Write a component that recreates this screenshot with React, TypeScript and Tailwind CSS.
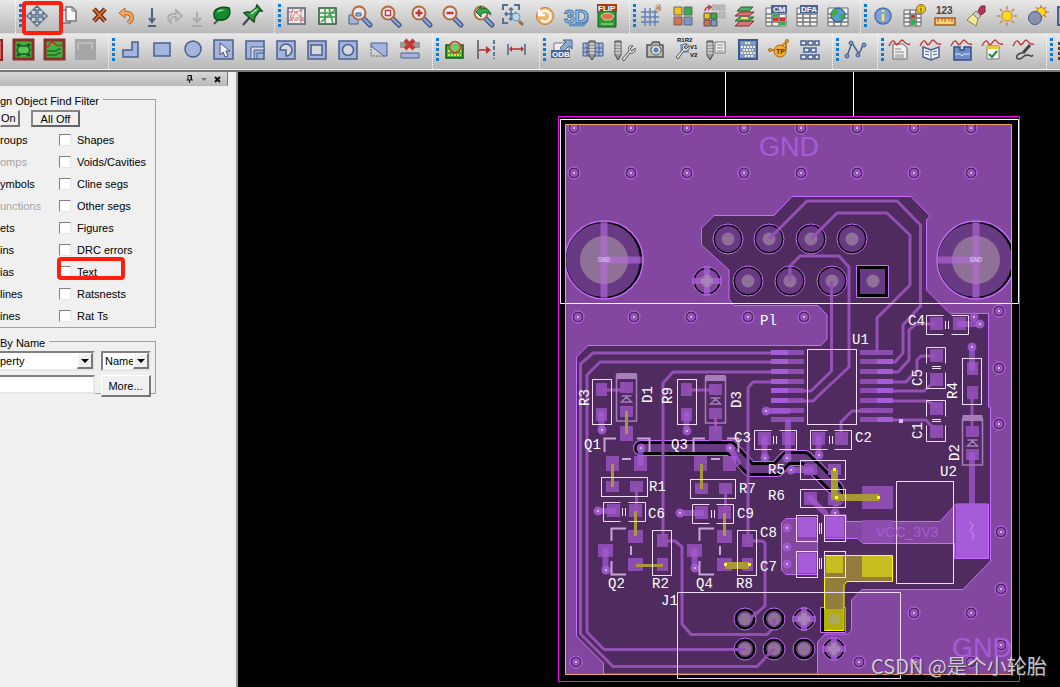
import type { ReactNode } from 'react';
import { clsx } from 'clsx';

const NAVY = '#48608f';
const BLUE = '#a3b4dd';

// ---------- toolbar icons, all drawn in a 24x24 box ----------

const sheet = (
  <>
    <path d="M2 4h20v18H2z" fill="#f2f2f2" stroke="#666" />
    <path d="M2 10h20M2 14h20M2 18h20M8 8v14M15 8v14" stroke="#777" strokeWidth="1.5" />
  </>
);

const lens = (inner: ReactNode) => (
  <>
    <path d="M15 15l6 6" stroke="#3d4f80" strokeWidth="5" strokeLinecap="round" />
    <path d="M15 15l6 6" stroke="#8ba0d2" strokeWidth="2.5" strokeLinecap="round" />
    <circle cx="10" cy="9" r="6.5" fill="#e3e8f5" stroke="#b86a36" strokeWidth="2" />
    {inner}
  </>
);

const probe = (
  <>
    <path d="M8 3h6v14l-3 5-3-5z" fill="#999" stroke="#444" />
    <path d="M8 6h6M8 9h6M8 12h6M8 15h6" stroke="#eee" />
  </>
);

const wave = <path d="M1 8c4-8 5-5 7-2s4-4 6-4 3 6 8 4" fill="none" stroke="#c43a3a" strokeWidth="1.5" />;

const tile = (inner: ReactNode) => (
  <>
    <path d="M3 3h18v18H3z" fill={BLUE} stroke={NAVY} strokeWidth="1.5" />
    {inner}
  </>
);

const wrench = (
  <path d="M10 21l7-8c-2-4 1-6 4-5l-3 3 2 2 3-3c1 4-2 6-5 5l-6 8z" fill="#ddd" stroke="#555" />
);

const icons: Record<string, ReactNode> = {
  Move: (
    <path
      d="M11 2l4 4h-3v5h5V8l4 4-4 4v-3h-5v5h3l-4 4-4-4h3v-5H5v3l-4-4 4-4v3h5V6H7z"
      fill="#d9e3ee"
      stroke="#54708c"
      strokeWidth="1.500"
    />
  ),
  Copy: (
    <>
      <path d="M5 6h8v13H5z" fill="#e8e8e8" stroke="#777" strokeWidth="1.5" />
      <path d="M9 3h6l4 4v10H9z" fill="#f6f6f6" stroke="#777" strokeWidth="1.5" />
      <path d="M15 3v4h4" fill="none" stroke="#777" />
    </>
  ),
  Delete: (
    <>
      <path d="M6 5l11 12M17 5L6 17" stroke="#5a2410" strokeWidth="4.5" />
      <path d="M6 5l11 12M17 5L6 17" stroke="#db6d2e" strokeWidth="2" />
    </>
  ),
  Undo: (
    <>
      <path d="M9 9c9-1 10 6 4 10" fill="none" stroke="#b6682b" strokeWidth="4.500" />
      <path d="M4 9l6-5v10z" fill="#f0a862" stroke="#b6682b" />
      <path d="M9 9c9-1 10 6 4 10" fill="none" stroke="#f0a862" strokeWidth="2.500" />
    </>
  ),
  'Undo to': <path d="M14 4v13M11 14l3 4 3-4M10 22h8" fill="none" stroke="#4a6580" strokeWidth="2" />,
  Redo: (
    <path d="M10 19c-6-5-2-10 5-9V6l6 6-6 5v-4c-4-1-6 2-5 6z" fill="#ccc" stroke="#a5a5a5" strokeWidth="1.500" />
  ),
  'Redo to': <path d="M13 8v10M9 14l4 4 4-4M8 22h10" fill="none" stroke="#aaa" strokeWidth="2" />,
  Via: (
    <>
      <path d="M3 20l5-5" stroke="#555" strokeWidth="2" />
      <path d="M3 11c-1-6 7-9 15-7 3 7-2 13-10 12-3 0-5-2-5-5z" fill="#178a2d" stroke="#0d4f1a" strokeWidth="1.5" />
      <path d="M6 9c0-4 4-4 9-3-3 1-7 1-9 3z" fill="#8ce28e" />
    </>
  ),
  Pin: (
    <>
      <path d="M1 21l7-8" stroke="#444" strokeWidth="2" />
      <path d="M2 9c4-2 6 0 7-1l5-4 1-3 5 6-3 0-4 6c-1 2 0 3-1 5z" fill="#2e9b3f" stroke="#14501f" strokeWidth="1.5" />
      <path d="M9 10l6-5" stroke="#8ce28e" strokeWidth="2" />
    </>
  ),
  Ratsnest: (
    <>
      <path d="M3 4h17v16H3z" fill="#eee" stroke="#555f75" strokeWidth="1.5" />
      <path d="M4 8h7l8-3M5 17l6-9 8 9M8 5l-3 9h14M16 5v14M4 16h15" fill="none" stroke="#c46a6a" strokeDasharray="4 1" />
    </>
  ),
  'Unrats all': (
    <>
      <path d="M3 4h17v16H3z" fill="#eee" stroke="#2e5238" strokeWidth="1.5" />
      <path d="M4 9h16M5 18L20 5M9 4v16M13 4l4 16M4 13h16" fill="none" stroke="#3f9d4d" strokeWidth="1.500" />
    </>
  ),
  'Zoom points': (
    <>
      <path d="M2 11h9v9H2z" fill={BLUE} stroke={NAVY} />
      <g transform="translate(2 0)">{lens(<path d="M7 9h5v3H7z" fill={BLUE} stroke={NAVY} />)}</g>
    </>
  ),
  'Zoom fit': lens(<path d="M7.500 6.500h5v5h-5z" fill="#fff" stroke="#c43a4a" strokeWidth="1.500" />),
  'Zoom in': lens(<path d="M10 5.500v7M6.500 9h7" stroke="#c4323c" strokeWidth="2.500" />),
  'Zoom out': lens(<path d="M6.500 9h7" stroke="#c4323c" strokeWidth="2.500" />),
  'Zoom previous': lens(
    <path d="M5 8l5-6v3c5-2 9 1 10 6-3-3-6-3-10-1v3z" fill="#35a548" stroke="#176128" />,
  ),
  'Zoom center': (
    <>
      <path d="M1 6V1h5M12 1h5v5M1 14v5h5" fill="none" stroke="#54708c" strokeWidth="2" />
      <path d="M9 4v12M3 10h12M7 6l2-2 2 2M7 14l2 2 2-2M5 8l-2 2 2 2M13 8l2 2-2 2" fill="none" stroke="#54708c" strokeWidth="1.500" />
      <path d="M17 17l4 4" stroke="#a56a3a" strokeWidth="3" />
      <circle cx="14" cy="13" r="4" fill="#b9d8ee" stroke="#6d91ae" />
    </>
  ),
  Refresh: (
    <>
      <circle cx="12" cy="12" r="8.500" fill="#f6b45e" stroke="#c47a2c" />
      <path d="M7 10a5.500 5.500 0 1 1 1 6M6 5v6h6" fill="none" stroke="#fff" strokeWidth="2.500" />
    </>
  ),
  '3D': (
    <>
      <path d="M5 21h14l4-4V9" fill="none" stroke="#5f94c4" strokeWidth="3" />
      <text x="0" y="19" fontSize="19" fontWeight="700" fill="#a8c8e8" stroke="#3f74a8" strokeWidth="1">3D</text>
    </>
  ),
  Flip: (
    <>
      <path d="M3 7h18v16H3z" fill="#2c9a35" stroke="#1a5520" />
      <path d="M6 12c3-4 9-4 13 0l-3 4H9zM6 20h12" fill="#e36c4e" stroke="#bfe7a5" />
      <path d="M2 0h20v8H2z" fill="#9b4413" />
      <text x="3" y="7" fontSize="8" fontWeight="700" fill="#fff">FLIP</text>
    </>
  ),
  Grid: (
    <>
      <path d="M5 4v18M10 4v18M15 6v16M1 8h17M1 13h18M1 18h18" stroke="#6680b8" strokeWidth="1.500" />
      <path d="M19 0v7M15 4h7M16 1l5 6M21 1l-5 5" stroke="#c77a34" />
    </>
  ),
  Colors: (
    <g stroke="#666">
      <path d="M3 3h8v8H3z" fill="#f4c320" />
      <path d="M13 3h8v8h-8z" fill="#3cab49" />
      <path d="M3 13h8v8H3z" fill="#d4734f" />
      <path d="M13 13h8v8h-8z" fill="#7f96cb" />
    </g>
  ),
  'Layer colors': (
    <>
      <path d="M10 1h6v5h-6zM17 1h6v5h-6zM17 8h6v6h-6z" fill="#bbb" stroke="#aaa" />
      <path d="M2 9h6v6H2z" fill="#f4c320" stroke="#555" />
      <path d="M9 9h6v6H9z" fill="#3cab49" stroke="#555" />
      <path d="M2 16h6v6H2z" fill="#d4734f" stroke="#555" />
      <path d="M9 16h6v6H9z" fill="#7f96cb" stroke="#555" />
      <path d="M3 7c0-3 2-4 5-4M6 1l3 2-3 3" fill="none" stroke="#c43a3a" strokeWidth="1.500" />
    </>
  ),
  'Cross section': (
    <>
      <path d="M7 17h14l-5 5H2z" fill="#d97676" stroke="#7d3035" />
      <path d="M7 13h14l-5 4H2z" fill="#58b163" stroke="#24612d" />
      <path d="M7 8h14l-5 4H2z" fill="#d97676" stroke="#7d3035" />
      <path d="M8 3h12l-4 4H4z" fill="#58b163" stroke="#24612d" />
      <path d="M8 14h7" stroke="#f4e36a" strokeWidth="2" />
    </>
  ),
  'Constraint manager': (
    <>
      {sheet}
      <path d="M9 10h5v3H9zM16 18h5v3h-5z" fill="#32b04b" />
      <path d="M9 14h5v3H9zM16 14h5v3h-5z" fill="#e02a2a" />
      <path d="M7 1h16v8H7z" fill="#4a6394" />
      <text x="9" y="8" fontSize="8" fontWeight="700" fill="#fff">CM</text>
    </>
  ),
  DFA: (
    <>
      {sheet}
      <path d="M5 1h18v8H5z" fill="#4a6394" />
      <text x="6" y="8" fontSize="8" fontWeight="700" fill="#fff">DFA</text>
    </>
  ),
  Globe: (
    <>
      {sheet}
      <circle cx="12" cy="11" r="7" fill="#5c9bd6" stroke="#235079" />
      <path d="M8 5c4 0 5 3 3 5s-3 5-4 3-3-5 1-8zM13 12l4-3 1 4-3 4z" fill="#3fae49" />
    </>
  ),
  Info: (
    <>
      <circle cx="12" cy="12" r="8" fill="#7f9fda" stroke="#506da8" strokeWidth="1.500" />
      <path d="M12 10v7M12 6v2" stroke="#f5e85c" strokeWidth="2.500" />
    </>
  ),
  'Show element': (
    <>
      <path d="M2 6h17v16H2z" fill="#f2f2f2" stroke="#666" />
      <path d="M2 10h17M2 14h17M2 18h17M8 6v16M14 6v16" stroke="#777" strokeWidth="1.5" />
      <path d="M9 11h4v3H9z" fill="#e02a2a" />
      <path d="M9 15h4v6H9z" fill="#32b04b" />
      <circle cx="19" cy="5" r="4.500" fill="#f4c320" stroke="#8a6a10" />
      <path d="M19 4v4M19 2v1" stroke="#5a4300" />
    </>
  ),
  Measure: (
    <>
      <text x="3" y="10" fontSize="10" fontWeight="700" fill="#444">123</text>
      <path d="M2 14h20v7H2z" fill="#f6cf74" stroke="#a85d1e" strokeWidth="1.500" />
      <path d="M5 14v4M9 14v3M12 14v4M16 14v3M19 14v4" stroke="#a85d1e" />
    </>
  ),
  Highlight: (
    <>
      <path d="M14 7l3-5h4v6l-4 3z" fill="#b83456" stroke="#7b2340" />
      <path d="M12 7l5 5-3 3-5-5z" fill="#ccc" stroke="#777" />
      <path d="M9 10l5 5-2 7-9-6z" fill="#f6e59a" stroke="#8c7c3c" />
    </>
  ),
  Sun: (
    <>
      <path d="M12 2v20M2 12h20M5 5l14 14M19 5L5 19" stroke="#c58a4a" strokeWidth="1.500" />
      <circle cx="12" cy="12" r="6.500" fill="#d0d0d0" />
      <circle cx="12" cy="12" r="5" fill="#ffd81f" stroke="#b8862a" />
    </>
  ),
  Shadow: (
    <>
      <path d="M15 1v14M8 8h15M10 3l10 10M20 3l-8 8" stroke="#c58a4a" strokeWidth="1.500" />
      <circle cx="15" cy="8" r="4.500" fill="#ffd81f" stroke="#b8862a" />
      <circle cx="9" cy="14" r="6.500" fill="#8592b0" stroke="#4a587a" />
    </>
  ),
  Edge: <path d="M1 3h20v18H1z" fill={BLUE} stroke={NAVY} strokeWidth="2" />,
  'Edge red': <path d="M2 2h20v20H2z" fill="#d66" stroke="#8a2525" strokeWidth="2" />,
  'Placement mode': (
    <>
      <path d="M3 2h19v19H3z" fill="#46b13f" stroke="#8a2f2a" strokeWidth="3" />
      <path d="M8 8h9l2 4-2 4H8l-2-4z" fill="#5cc455" stroke="#1d5a2a" strokeWidth="1.500" />
      <path d="M6 6h3v2H6zM16 6h3v2h-3zM6 16h3v2H6zM16 16h3v2h-3z" fill="#1d5a2a" stroke="#1d5a2a" />
    </>
  ),
  'Etch mode': (
    <>
      <path d="M3 2h19v19H3z" fill="#46b13f" stroke="#8a2f2a" strokeWidth="3" />
      <path d="M4 8c3 3 3-4 6-4s4 7 11 2" fill="none" stroke="#b23030" strokeWidth="1.500" />
      <path d="M5 13h9l3-2h2M5 17h9l3-2h2" fill="none" stroke="#1d6a2a" strokeWidth="1.500" />
    </>
  ),
  'Signal mode': (
    <>
      <path d="M2 1h21v21H2z" fill="#a6a6a6" />
      <path d="M5 12V5h14v6" fill="none" stroke="#d4d4d4" />
    </>
  ),
  'Shape polygon': <path d="M4 19v-7h9V4h6v15z" fill={BLUE} stroke={NAVY} strokeWidth="1.500" />,
  'Shape rectangle': <path d="M4 5h16v13H4z" fill={BLUE} stroke={NAVY} strokeWidth="1.500" />,
  'Shape circle': <circle cx="12" cy="11" r="8" fill={BLUE} stroke={NAVY} strokeWidth="1.500" />,
  'Shape select': (
    <>
      <path d="M2 2h19v19H2z" fill={BLUE} stroke={NAVY} strokeWidth="1.5" />
      <path d="M8 5v12l3-3 2 5 3-1-2-5h4z" fill="#eee" stroke="#47546b" />
    </>
  ),
  'Shape edit': tile(
    <>
      <path d="M8 21V9h13v3H11v9z" fill="#ddd" stroke={NAVY} />
      <path d="M14 21v-6h7" fill="none" stroke={NAVY} />
    </>,
  ),
  'Void polygon': tile(<path d="M6 12h6v6a6 6 0 1 0-6-6z" fill="#d8d8d8" stroke={NAVY} strokeWidth="1.500" />),
  'Void rectangle': tile(<path d="M6 7h11v10H6z" fill="#d8d8d8" stroke={NAVY} strokeWidth="1.500" />),
  'Void circle': tile(<circle cx="12" cy="12" r="5.500" fill="#d8d8d8" stroke={NAVY} strokeWidth="1.500" />),
  'Void element': (
    <>
      <path d="M4 5h16v13h-3L4 8z" fill={BLUE} stroke={NAVY} />
      <path d="M4 8v10h13" fill="none" stroke="#665" strokeDasharray="2 1" />
    </>
  ),
  'Delete islands': (
    <>
      <path d="M2 4h20v6H2z" fill="#999" />
      <path d="M7 2l9 9M16 2l-9 9" stroke="#c8372c" strokeWidth="4" />
      <path d="M3 15h18v5H3z" fill={BLUE} stroke={NAVY} />
    </>
  ),
  'Drc update': (
    <>
      <path d="M3 7h17v13H3z" fill="#49b23c" stroke="#145719" strokeWidth="1.500" />
      <path d="M5 17h13M5 13h13" stroke="#d7e84a" strokeDasharray="2 1" strokeWidth="2" />
      <circle cx="12" cy="9" r="5.500" fill="#7bd270" fillOpacity="0.8" stroke="#cf3b3b" strokeWidth="1.500" />
    </>
  ),
  'Spread out': (
    <>
      <path d="M4 2v19" stroke="#555" strokeWidth="1.500" />
      <path d="M20 2v19" stroke="#35568c" strokeWidth="1.500" strokeDasharray="4 2" />
      <path d="M5 12h8" stroke="#b83030" strokeWidth="1.500" />
      <path d="M12 8l5 4-5 4z" fill="#b83030" />
    </>
  ),
  Dimension: (
    <>
      <path d="M3 6v11M20 6v11" stroke="#48608f" strokeWidth="1.500" />
      <path d="M6 11h12" stroke="#b83030" strokeWidth="1.500" />
      <path d="M4 11l3-3v6zM19 11l-3-3v6z" fill="#b83030" />
    </>
  ),
  ODB: (
    <>
      <path d="M4 5h15v14H4z" fill="#eee" stroke="#777" />
      <path d="M10 10l6-6-3-2h9v9l-3-3-6 6z" fill="#8fa8cf" stroke="#4a6394" />
      <path d="M1 12h19v8H1z" fill="#4a6394" />
      <text x="2" y="19" fontSize="8" fontWeight="700" fill="#fff">ODB</text>
    </>
  ),
  'Probe table': (
    <>
      <path d="M2 5h20v13H2z" fill={BLUE} stroke={NAVY} />
      <path d="M2 10h20M2 14h20M6 5v13M18 5v13" stroke={NAVY} />
      {probe}
    </>
  ),
  'Probe tools': (
    <>
      <g transform="translate(-5 0)">{probe}</g>
      {wrench}
    </>
  ),
  Camera: (
    <>
      <path d="M4 7h4l2-3h6l1 3h3v12H4z" fill="#bcbcbc" stroke="#555" strokeWidth="1.500" />
      <circle cx="13" cy="12" r="5" fill="#ddd" stroke="#555" />
      <circle cx="13" cy="12" r="2.500" fill="#5b78b8" />
    </>
  ),
  Rename: (
    <>
      <path d="M6 6h9v9H6z" fill="#88a3d6" />
      <text x="3" y="4" fontSize="6" fontWeight="700" fill="#111">R1R2</text>
      <text x="16" y="11" fontSize="6" fontWeight="700" fill="#111">V1</text>
      <text x="16" y="19" fontSize="6" fontWeight="700" fill="#111">V2</text>
      <g transform="translate(-8 -2)">{wrench}</g>
    </>
  ),
  'Probe report': (
    <>
      <g transform="translate(-6 0)">{probe}</g>
      <path d="M10 4h10v11H10z" fill="#eee" stroke="#777" />
      <path d="M12 7h6M12 10h6M12 13h6" stroke="#888" />
    </>
  ),
  Matrix: (
    <>
      <path d="M3 2h18v19H3z" fill="#7f97c8" stroke="#3d588f" strokeWidth="2" />
      <path d="M9 5h6M5 9h14M7 12h10M5 15h14M9 18h8" stroke="#f5eec0" strokeWidth="2" strokeDasharray="2 1" />
    </>
  ),
  Testpoint: (
    <>
      <path d="M2 12h9M14 9l5-5M19 4v8" stroke="#c8801e" strokeWidth="2" />
      <circle cx="20" cy="3" r="1.500" fill="#f2ae2e" stroke="#a96712" />
      <circle cx="3" cy="12" r="1.500" fill="#f2ae2e" stroke="#a96712" />
      <circle cx="13" cy="13" r="6" fill="#f2ae2e" stroke="#a96712" />
      <text x="9" y="16" fontSize="7" fontWeight="700" fill="#513000">TP</text>
    </>
  ),
  Array: (
    <>
      <path d="M4 5h16M6 12h12M4 19h16" stroke="#888" />
      <path d="M3 3h5v4H3zM10 3h5v4h-5zM17 3h4v4h-4zM6 10h5v4H6zM13 10h5v4h-5zM3 17h5v4H3zM10 17h5v4h-5zM17 17h4v4h-4z" fill="#e6ecfa" stroke={NAVY} strokeWidth="1.500" />
    </>
  ),
  Net: (
    <>
      <path d="M4 18l5-13 7 11 5-11" fill="none" stroke={NAVY} strokeWidth="1.500" />
      <g fill="#7f97c8" stroke={NAVY}>
        <circle cx="4" cy="18" r="2" />
        <circle cx="8" cy="5" r="2" />
        <circle cx="15" cy="17" r="2" />
        <circle cx="21" cy="7" r="2" />
      </g>
    </>
  ),
  'Signal report': (
    <>
      <path d="M5 6h10l4 4v11H5z" fill="#eee" stroke="#666" />
      <path d="M7 11h6M7 14h9M7 17h9M7 19h9" stroke="#888" />
      {wave}
    </>
  ),
  'Signal library': (
    <>
      <path d="M4 9l8 3 8-3v10l-8 3-8-3z" fill="#f2f5fc" stroke={NAVY} strokeWidth="1.500" />
      <path d="M12 12v9M6 13l4 1M6 16l4 1M14 14l4-1M14 17l4-1" stroke={NAVY} />
      {wave}
    </>
  ),
  'Signal model': (
    <>
      <path d="M4 9h6v3h4V9h7v13H4z" fill="#6d8cc8" stroke="#334f86" strokeWidth="1.500" />
      <path d="M5 16h5l2 2 2-2h6" fill="none" stroke="#dfe8fa" />
      {wave}
    </>
  ),
  'Signal audit': (
    <>
      <path d="M6 8h12v13H6z" fill="#f5f5f5" stroke="#777" />
      <path d="M6 8h12v3H6z" fill="#e8c63a" />
      <path d="M8 16l3 3 5-6" fill="none" stroke="#208a35" strokeWidth="2" />
      {wave}
    </>
  ),
  'Signal probe': (
    <>
      {wave}
      <path d="M18 7l-7 8" stroke="#444" strokeWidth="3" />
      <path d="M11 15c-7 0-8 6-4 6s4-4 8-4 4 3 6 0" fill="none" stroke="#444" strokeWidth="1.500" />
    </>
  ),
  Board: <path d="M2 5h20v16H2z" fill="#e8c63a" stroke="#444" strokeWidth="2" strokeDasharray="3 2" />,
};

const rowOne = [
  [
    'Ratsnest', 'Unrats all', 'Zoom points', 'Zoom fit', 'Zoom in', 'Zoom out',
    'Zoom previous', 'Zoom center', 'Refresh', '3D', 'Flip',
  ],
  ['Grid', 'Colors', 'Layer colors', 'Cross section', 'Constraint manager', 'DFA', 'Globe'],
  ['Info', 'Show element', 'Measure', 'Highlight', 'Sun', 'Shadow', 'Edge'],
];

const rowTwo = [
  [
    'Shape polygon', 'Shape rectangle', 'Shape circle', 'Shape select', 'Shape edit',
    'Void polygon', 'Void rectangle', 'Void circle', 'Void element', 'Delete islands',
  ],
  ['Drc update', 'Spread out', 'Dimension'],
  ['ODB', 'Probe table', 'Probe tools', 'Camera', 'Rename', 'Probe report', 'Matrix', 'Testpoint', 'Array'],
  ['Net'],
  ['Signal report', 'Signal library', 'Signal model', 'Signal audit', 'Signal probe'],
  ['Board'],
];

function ToolButton({ name, narrow, marked }: { name: string; narrow?: boolean; marked?: boolean }) {
  return (
    <button
      type="button"
      aria-label={name}
      className={clsx('relative flex h-8 shrink-0 items-center justify-center', narrow ? 'w-[23px]' : 'w-[31px]')}
    >
      <svg viewBox="0 0 24 24" className="size-6 shrink-0 overflow-visible" fontFamily="Liberation Sans, sans-serif">
        {icons[name]}
      </svg>
      {marked && (
        <span className="absolute top-px left-0 z-10 h-[34px] w-[41px] rounded-sm border-4 border-[#ff1f0f]" />
      )}
    </button>
  );
}

function Grip() {
  return (
    <div className="flex w-[7px] shrink-0 self-stretch">
      <div className="w-0 border-l border-dotted border-white" />
      <div className="ml-[3px] flex flex-col gap-0.5 pt-1">
        {[0, 1, 2, 3, 4].map((i) => (
          <span key={i} className="size-[3px] bg-[#0a7bdc]" />
        ))}
      </div>
    </div>
  );
}

function ToolGroup({ names }: { names: string[] }) {
  return (
    <div className="flex shrink-0 items-start pr-[7px]">
      <Grip />
      {names.map((name) => (
        <ToolButton key={name} name={name} />
      ))}
    </div>
  );
}

function Toolbars() {
  return (
    <header className="shrink-0 overflow-hidden border-b-2 border-[#777]">
      <div className="relative z-10 flex h-[34px] border-b border-[#ddd] bg-linear-to-b from-[#e8e8e8] to-[#b9b9b9]">
        <div className="w-[15px] shrink-0" />
        <div className="flex shrink-0 items-start pr-[5px]">
          <Grip />
          <ToolButton name="Move" marked />
          <ToolButton name="Copy" />
          <ToolButton name="Delete" />
          <ToolButton name="Undo" narrow />
          <ToolButton name="Undo to" narrow />
          <ToolButton name="Redo" narrow />
          <ToolButton name="Redo to" narrow />
          <ToolButton name="Via" />
          <ToolButton name="Pin" />
        </div>
        {rowOne.map((names) => (
          <ToolGroup key={names[0]} names={names} />
        ))}
      </div>
      <div className="flex h-9 border-b border-white bg-linear-to-b from-[#e8e8e8] to-[#b9b9b9]">
        <div className="-ml-6 flex shrink-0 items-start pr-2">
          {['Edge red', 'Placement mode', 'Etch mode', 'Signal mode'].map((name) => (
            <ToolButton key={name} name={name} />
          ))}
        </div>
        {rowTwo.map((names) => (
          <ToolGroup key={names[0]} names={names} />
        ))}
      </div>
    </header>
  );
}

// ---------- find filter panel ----------

const filterRows = [
  { left: 'roups', right: 'Shapes' },
  { left: 'omps', right: 'Voids/Cavities', off: true },
  { left: 'ymbols', right: 'Cline segs' },
  { left: 'unctions', right: 'Other segs', off: true },
  { left: 'ets', right: 'Figures' },
  { left: 'ins', right: 'DRC errors' },
  { left: 'ias', right: 'Text', marked: true },
  { left: 'lines', right: 'Ratsnests' },
  { left: 'ines', right: 'Rat Ts' },
];

const raised = 'border-t border-l border-r-2 border-b-2 border-t-white border-l-white border-r-[#777] border-b-[#777] bg-[#f0f0f0]';
const sunken = 'border-t-[#808080] border-l-[#808080] border-r-[#e6e6e6] border-b-[#e6e6e6] bg-white';

function DropDown({ label, value, flush }: { label: string; value: string; flush?: boolean }) {
  return (
    <div className={clsx('relative h-5', flush ? 'w-[95px]' : 'w-[50px]')}>
      <select
        aria-label={label}
        className={clsx('block h-5 w-full appearance-none border-2', sunken, flush ? 'border-l-0' : 'pl-0.5')}
      >
        <option>{value}</option>
      </select>
      <span
        className={clsx('pointer-events-none absolute top-0.5 right-0.5 flex h-4 w-4 items-center justify-center', raised)}
      >
        <svg viewBox="0 0 8 4" className="h-1 w-2">
          <path d="M0 0h8L4 4z" />
        </svg>
      </span>
    </div>
  );
}

function FindPanel() {
  return (
    <aside className="w-[238px] shrink-0 border-r-2 border-[#999] bg-[#f0f0f0]">
      <div className="mr-2 flex h-[14px] items-center justify-end gap-[7px] border-r border-[#777] bg-linear-to-b from-[#d8d8d8] to-[#b8b8b8] pr-1.5">
        <button type="button" aria-label="Auto hide">
          <svg viewBox="0 0 8 8" className="size-2" fill="none" stroke="#111">
            <path d="M2 5V.5h3.500V5M5 .5V5M.5 5h6.500M3.500 5v3" />
          </svg>
        </button>
        <button type="button" aria-label="Panel menu">
          <svg viewBox="0 0 6 3" className="h-[3px] w-1.5">
            <path d="M0 0h6L3 3z" fill="#777" />
          </svg>
        </button>
        <button type="button" aria-label="Close">
          <svg viewBox="0 0 7 7" className="size-[7px]">
            <path d="M1 1l5 5M6 1L1 6" stroke="#111" strokeWidth="2" />
          </svg>
        </button>
      </div>

      <fieldset className="mt-1 h-[238px] w-[156px] border border-l-0 border-[#a0a0a0]">
        <legend className="pt-1 pr-1 leading-[14px]">gn Object Find Filter</legend>
        <div className="flex gap-[11px] pt-0.5">
          <button type="button" className={clsx('h-[17px] w-5 text-left leading-3', raised)}>
            On
          </button>
          <button type="button" className="h-[17px] w-[49px] border-2 border-[#888] border-r-[#666] border-b-[#666] bg-[#f0f0f0] leading-3">
            All Off
          </button>
        </div>
        <div className="pt-0.5">
          {filterRows.map((row) => (
            <div key={row.left} className="relative flex h-[22px] items-center">
              <span className={clsx('w-[59px]', row.off && 'text-[#a5a5a5]')}>{row.left}</span>
              <label className="flex items-center gap-1.5">
                <input type="checkbox" className={clsx('size-3 appearance-none border', sunken)} />
                {row.right}
              </label>
              {row.marked && (
                <span className="absolute -top-1 left-[57px] h-[23px] w-[68px] rounded-sm border-4 border-[#ff1f0f]" />
              )}
            </div>
          ))}
        </div>
      </fieldset>

      <fieldset className="mt-1 h-[62px] w-[156px] border border-l-0 border-[#a0a0a0]">
        <legend className="pt-1 pr-1 leading-[14px]">By Name</legend>
        <div className="grid grid-cols-[95px_50px] gap-x-1.5 gap-y-1 pt-px">
          <DropDown label="Object type" value="perty" flush />
          <DropDown label="Find by" value="Name" />
          <input aria-label="Object name" className={clsx('h-[19px] w-full border-2 border-l-0', sunken)} />
          <button type="button" className={clsx('h-[22px] leading-4', raised)}>
            More...
          </button>
        </div>
      </fieldset>
    </aside>
  );
}

// ---------- board ----------

const PLANE = '#83479f';
const DARK = '#502b60';
const EDGE = '#c76cff';
const TRACE = '#9450b4';
const PAD = '#8d4caf';
const BRIGHT = '#a65cd8';
const SILK = '#f0dcfa';
const HOLE = '#8f7096';
const RING = '#693a84';

const vias = [
  [574, 173], [631, 173], [687, 173], [744, 173], [801, 173], [857, 173], [914, 173], [971, 173],
  [578, 317], [634, 317], [691, 317], [748, 317], [804, 317],
  [999, 311], [999, 368], [999, 424], [1001, 532], [1001, 589], [1001, 645],
  [914, 613], [971, 613], [859, 662], [916, 662], [971, 662], [576, 662],
  [574, 128], [631, 128], [687, 128], [744, 128], [801, 128], [857, 128], [914, 128], [971, 128],
];

const softVias = [
  [602, 430], [687, 431], [598, 511], [680, 513], [606, 570], [695, 568], [641, 448], [730, 448],
  [765, 458], [787, 458], [819, 455], [791, 470], [766, 411], [974, 317], [980, 324], [972, 347],
  [787, 528], [787, 547], [787, 564], [835, 513],
];

const traces = [
  'M769 239L807 201H897L920.500 225V306L903 325V353L895 362H877',
  'M811 239L837 213H887L910 235V285L877 318V352',
  'M790 281V266L800 256H839L849 267V367L813 401H771',
  'M831.500 281V371L811 391H771',
  'M877 372H898L909 360V330L916 324H937',
  'M877 382H906L917 370V360L921 356H937',
  'M877 391H924L937 379',
  'M877 401H928L937 408',
  'M877 420H926L937 432',
  'M877 411H852L841 422V438',
  'M788 353H593L580.500 364V634L613 666.500H757L774 649',
  'M788 362H600L587 375V632L604 649.500H745',
  'M788 372H673L663 383V541H675L682 547V624L691 634.500H767L774 627V619',
  'M788 382H753L748 388V541H762L765 543V606L750 619',
  'M602 390H627', 'M687 390H716', 'M715.500 413V434', 'M636.500 487V511', 'M725.500 488V513', 'M972 392V431',
];

const wideTraces = [
  'M601.500 414V430', 'M686.500 414V430', 'M598 511H613', 'M680 513H701', 'M605.500 551V570', 'M694.500 551V568',
  'M640.500 448V463', 'M730 448L738 463', 'M764.500 438V458', 'M788 422V458', 'M818.500 438V455', 'M791 470H811',
  'M766 411H788', 'M960 324H980', 'M972 347V368', 'M972 455V530', 'M810 498L825 513',
];

// x, y, width, height of each pad, centred
const pads = [
  [601, 389, 11, 13], [601, 414, 11, 13], [626, 387, 13, 11], [626, 411, 13, 11], [626, 433, 13, 15],
  [686, 389, 11, 13], [686, 414, 11, 13], [715, 389, 13, 11], [715, 413, 13, 11], [715, 433, 13, 15],
  [612, 463, 13, 15], [640, 463, 13, 15], [700, 463, 13, 15], [729, 463, 13, 15],
  [612, 486, 13, 11], [636, 486, 13, 11], [701, 488, 13, 11], [725, 488, 13, 11],
  [613, 510, 13, 13], [635, 510, 13, 13], [701, 512, 13, 13], [724, 512, 13, 13],
  [605, 550, 15, 13], [635, 536, 15, 13], [635, 564, 15, 13], [694, 550, 15, 13], [724, 536, 15, 13], [724, 564, 15, 13],
  [662, 540, 11, 13], [662, 564, 11, 13], [747, 540, 11, 13], [747, 564, 11, 13],
  [764, 438, 13, 13], [788, 438, 13, 13], [818, 438, 13, 13], [841, 438, 13, 13],
  [810, 469, 13, 11], [834, 469, 13, 11], [810, 498, 13, 13], [834, 498, 13, 13],
  [936, 323, 13, 13], [959, 323, 13, 13], [936, 355, 13, 13], [936, 379, 13, 13], [936, 408, 13, 13], [936, 431, 13, 13],
  [972, 368, 11, 13], [972, 392, 11, 13], [972, 431, 13, 11], [972, 454, 13, 11],
  [877, 497, 31, 23], [877, 531, 31, 23],
];

// closed outlines as x1, y1, x2, y2
const boxes = [
  [592, 379, 611, 424], [677, 379, 696, 424], [601, 477, 647, 496], [690, 479, 735, 498],
  [652, 530, 671, 575], [737, 530, 756, 575], [800, 460, 845, 479], [800, 489, 845, 507],
  [962, 358, 981, 404], [807, 349, 856, 424], [896, 481, 953, 583],
  [796, 515, 817, 541], [824, 515, 845, 541], [796, 551, 817, 577], [824, 551, 845, 577],
];

// two-part capacitor outlines: left, top, right, bottom
const caps = [
  [603, 502, 645, 521], [692, 504, 733, 523], [754, 430, 796, 449], [810, 430, 851, 449], [926, 315, 968, 334],
];
const tallCaps = [
  [926, 347, 945, 388], [926, 400, 945, 441],
];

const labels: [string, number, number][] = [
  ['Pl', 760, 325], ['U1', 852, 344], ['C4', 908, 325], ['U2', 940, 476], ['C2', 855, 442], ['C3', 734, 442],
  ['R5', 768, 474], ['R6', 768, 500], ['R1', 649, 491], ['R7', 739, 493], ['C6', 648, 518], ['C9', 737, 518],
  ['C8', 760, 537], ['C7', 760, 571], ['Q1', 584, 449], ['Q3', 671, 449], ['Q2', 608, 588], ['R2', 652, 588],
  ['Q4', 696, 588], ['R8', 736, 588], ['J1', 661, 605],
];

const turnedLabels: [string, number, number][] = [
  ['R3', 589, 406], ['D1', 652, 403], ['R9', 672, 404], ['D3', 741, 408],
  ['C5', 922, 386], ['R4', 957, 399], ['D2', 959, 461], ['C1', 922, 439],
];

function Pin({ x, y, r, ring = 2, thermal }: { x: number; y: number; r: number; ring?: number; thermal?: boolean }) {
  return (
    <g>
      <circle cx={x} cy={y} r={r} fill="#000" stroke={EDGE} />
      <circle cx={x} cy={y} r={r - ring} fill={thermal ? PLANE : RING} />
      {thermal && (
        <path d={`M${x - r - 1} ${y}h${r * 2 + 2}M${x} ${y - r - 1}v${r * 2 + 2}`} stroke={BRIGHT} strokeWidth="6" strokeOpacity="0.8" />
      )}
      <circle cx={x} cy={y} r="6.500" fill={HOLE} />
      {thermal && <path d={`M${x - 6} ${y}h12M${x} ${y - 6}v12`} stroke="#bd8cdc" strokeWidth="5" strokeOpacity="0.6" />}
    </g>
  );
}

function MountingHole({ x, arm }: { x: number; arm: number }) {
  return (
    <g>
      <circle cx={x} cy="260" r="39" fill="#000" stroke={EDGE} strokeWidth="1.500" />
      <circle cx={x - 1} cy="260" r="37" fill={RING} />
      <circle cx={x} cy="260" r="24" fill={HOLE} />
      <path d={`M${x} 222v76M${x} 260h${arm}`} stroke="#b76be0" strokeWidth="7" strokeOpacity="0.6" />
      <text x={x} y="262" fontSize="7" textAnchor="middle" fill="#e6d8ec">GND</text>
    </g>
  );
}

function Diode({ x, y, bar }: { x: number; y: number; bar: number }) {
  return (
    <g stroke="#a67eb9" fill="none" strokeWidth="1.500">
      <rect x={x - 10} y={y - 24} width="20" height="46" />
      <path d={`M${x - 5} ${y - 3}h10M${x - 5} ${y + 3}h10l-5 -5z`} />
      <rect x={x - 10} y={bar} width="20" height="6" fill="#a67eb9" stroke="none" />
    </g>
  );
}

function Board() {
  const link = 'M641 448H731L750 469H777L787 458H805L836 489V498';
  return (
    <svg
      viewBox="238 72 822 615"
      preserveAspectRatio="xMinYMin slice"
      className="block h-full w-full"
      fontFamily="Liberation Mono, monospace"
      role="img"
      aria-label="Board layout"
    >
      <defs>
        <clipPath id="board-area">
          <path d="M566 125h446v549H566z" />
        </clipPath>
      </defs>

      <path d="M725.500 72v45M853.500 72v45" stroke="#fff" />
      <path d="M558.500 116.500h461v565h-461z" fill="none" stroke="#f0f" />

      <g clipPath="url(#board-area)">
        <path d="M566 125h446v549H566z" fill={PLANE} />
        <path
          d="M701.500 228L714 215.500H774L792 196.500H911L930 216L926.500 220V290L950 313.500H988.500V407H990.500V561L963 589.500H862L851.500 600V630L848 634H825L817.500 642V674H603.500V663L576.500 636V357L588 345.500H821L827 339V315L818 305.500H734L729 299V270L701.500 245z"
          fill={DARK}
          stroke={EDGE}
        />
        {vias.map(([x, y]) => (
          <g key={`${x}-${y}`}>
            <circle cx={x} cy={y} r="6" fill={DARK} stroke={EDGE} />
            <circle cx={x} cy={y} r="3.500" fill={TRACE} stroke={EDGE} strokeOpacity="0.5" />
            <path d={`M${x - 1} ${y - 1}h2v2h-2z`} fill="#c9bcd0" />
          </g>
        ))}
        <MountingHole x={604} arm={39} />
        <MountingHole x={976} arm={-39} />
      </g>

      <g fill={BRIGHT} fontFamily="Liberation Sans, sans-serif">
        <text x="759" y="156" fontSize="27">GND</text>
        <text x="952" y="657" fontSize="27">GND</text>
      </g>

      {/* power shapes around the regulator */}
      <path d="M824.500 515V538.500H858L863 543.500H954.500V558.500H988.500V504H956L940 521.500H846V515z" fill={PLANE} stroke={EDGE} />
      <path d="M786 518.500H817.500V574.500H786L781.500 570V523z" fill={PLANE} stroke={EDGE} />
      <path d="M956 504h32v54h-32z" fill={BRIGHT} />
      <path d="M798 517h18v20h-18zM826 517h18v20h-18zM798 553h18v20h-18z" fill={BRIGHT} />

      {[728, 769, 811, 852].map((x) => (
        <Pin key={x} x={x} y={239} r={15} />
      ))}
      <Pin x={707} y={281} r={14} thermal />
      {[748, 790, 832].map((x) => (
        <Pin key={x} x={x} y={281} r={15} />
      ))}
      <path d="M856.500 265.500h32v32h-32z" fill="#000" stroke={EDGE} />
      <path d="M860 269h25v25h-25z" fill={RING} />
      <circle cx="873" cy="281" r="6.500" fill={HOLE} />

      {/* differential link with its clearance */}
      <g fill="none" strokeLinecap="round" strokeLinejoin="round">
        <path d={link} stroke={EDGE} strokeWidth="16" />
        <path d={link} stroke="#000" strokeWidth="14" />
        <path d={link} stroke={RING} strokeWidth="8" />
      </g>

      {pads.map(([x, y, w, h]) => (
        <rect key={`${x}-${y}`} x={x - (w - 1) / 2} y={y - (h - 1) / 2} width={w} height={h} fill={PAD} />
      ))}
      {[350, 359, 369, 379, 388, 398, 408, 417].map((y) => (
        <path key={y} d={`M771 ${y}h33v5h-33zM860 ${y}h33v5h-33z`} fill={PAD} />
      ))}
      <g fill="none" strokeLinejoin="round">
        {traces.map((d) => (
          <path key={d} d={d} stroke={TRACE} strokeWidth="3" />
        ))}
        {wideTraces.map((d) => (
          <path key={d} d={d} stroke={BRIGHT} strokeOpacity="0.7" strokeWidth="6" strokeLinecap="round" />
        ))}
      </g>
      {[350, 359, 369, 379, 388, 398].map((y) => (
        <path key={y} d={`M771 ${y}h17v5h-17z`} fill={BRIGHT} />
      ))}
      {[359, 369, 379, 388, 398, 417].map((y) => (
        <path key={y} d={`M877 ${y}h16v5h-16z`} fill={BRIGHT} />
      ))}
      {softVias.map(([x, y]) => (
        <g key={`${x}-${y}`}>
          <circle cx={x} cy={y} r="4.500" fill={BRIGHT} fillOpacity="0.8" />
          <path d={`M${x - 1} ${y - 1}h2v2h-2z`} fill="#c9bcd0" />
        </g>
      ))}
      <path d="M899 419h4v4h-4z" fill="#e0b8f5" />

      <Pin x={745} y={619} r={11} ring={3} />
      <Pin x={774} y={619} r={11} ring={3} />
      <Pin x={804} y={619} r={11} thermal />
      <Pin x={745} y={649} r={11} ring={3} />
      <Pin x={774} y={649} r={11} ring={3} />
      <Pin x={804} y={649} r={11} ring={3} />
      <Pin x={834} y={649} r={11} thermal />
      <path d="M750 619L757 612M774 619V627M745 649.500h-10M774 649L767 656" stroke={TRACE} strokeWidth="3" />

      {/* highlighted net */}
      <path d="M820.500 607.500h25v25h-25z" fill="#000" stroke={EDGE} />
      <path d="M824.500 555.500H892.500V581.500H847L844 585V630.500H824.500z" fill="#937d3c" stroke="#ff0" />
      <path d="M826 556h17v17h-17zM862 556h30v21h-30z" fill="#c8bd20" />
      <path d="M824 609h19v21h-19z" fill="#b6ae08" />
      <circle cx="834" cy="619" r="6" fill="#aba95c" />
      <g stroke="#a8983a" strokeWidth="3">
        <path d="M626.500 411v23M612.500 464v23M701.500 464v25M635.500 511v25M724.500 513v23M636 565.500h27" />
        <path d="M725 565.500h24M834.500 470v30M836 497.500h43" strokeWidth="7" />
      </g>
      <path d="M724 563h3v3h-3zM748 563h3v3h-3zM833 468h3v3h-3zM835 496h3v3h-3zM877 496h3v3h-3z" fill="#ff0" />

      {/* silkscreen */}
      <g fill="none" stroke={SILK}>
        <path d="M560.500 119.500h458v184h-458z" stroke="#fff" />
        <path d="M677.500 592.500h223v86h-223z" />
        {boxes.map(([x1, y1, x2, y2]) => (
          <rect key={`${x1}-${y1}`} x={x1 + 0.5} y={y1 + 0.5} width={x2 - x1} height={y2 - y1} />
        ))}
        {caps.map(([x1, y1, x2, y2]) => (
          <path
            key={`${x1}-${y1}`}
            d={`M${x1 + 17.5} ${y1 + 0.5}H${x1 + 0.5}V${y2 + 0.5}H${x1 + 17.5}M${x2 - 16.5} ${y1 + 0.5}H${x2 + 0.5}V${y2 + 0.5}H${x2 - 16.5}M${x1 + 19.5} ${y1 + 6}v8M${x1 + 22.5} ${y1 + 6}v8`}
          />
        ))}
        {tallCaps.map(([x1, y1, x2, y2]) => (
          <path
            key={`${x1}-${y1}`}
            d={`M${x1 + 0.5} ${y1 + 16.5}V${y1 + 0.5}H${x2 + 0.5}V${y1 + 16.5}M${x1 + 0.5} ${y2 - 15.5}V${y2 + 0.5}H${x2 + 0.5}V${y2 - 15.5}M${x1 + 6} ${y1 + 19.5}h9M${x1 + 6} ${y1 + 21.5}h9`}
          />
        ))}
        <path d="M819.500 523v11M821.500 523v11M819.500 558v11M821.500 558v11" />
        <path
          d="M604.500 452V438.500H616M637 438.500H649.500V452M622 459h9M693.500 452V438.500H705M727 438.500H738.500V452M711 459h9M611.500 541V528.500H626M611.500 561V574.500H626M631 546v9M699.500 541V528.500H714M699.500 561V574.500H714M720 546v9"
          stroke="#c9a6dc"
          strokeWidth="2"
        />
      </g>
      <Diode x={626.5} y={399} bar={373} />
      <Diode x={715.5} y={401} bar={375} />
      <Diode x={972.5} y={443} bar={415} />

      <g fill="#fff" fontSize="14">
        {labels.map(([text, x, y]) => (
          <text key={text} x={x} y={y}>{text}</text>
        ))}
        {turnedLabels.map(([text, x, y]) => (
          <text key={text} transform={`translate(${x} ${y}) rotate(-90)`}>{text}</text>
        ))}
      </g>
      <text x="876" y="537" fontSize="14" fill={BRIGHT} fontFamily="Liberation Sans, sans-serif">VCC_3V3</text>
      <path d="M970 522l3 4-3 4 4 5-2 5" fill="none" stroke="#e6d8ec" strokeDasharray="1 1" />

      <path d="M565.500 124.500h446v550h-446z" fill="none" stroke="#f0a860" />
      <text
        x="871"
        y="674"
        fontSize="20"
        fill="#e9e4ee"
        fillOpacity="0.85"
        fontFamily="Noto Sans CJK SC, sans-serif"
        className="[text-shadow:1px_1px_1px_#333]"
      >
        CSDN @是个小轮胎
      </text>
    </svg>
  );
}

export default function App() {
  return (
    <div className="flex h-screen flex-col overflow-hidden bg-black font-['Liberation_Sans',Arial,sans-serif] text-[11px] leading-[14px] text-black">
      <Toolbars />
      <div className="flex min-h-0 flex-1">
        <FindPanel />
        <main className="min-w-0 flex-1">
          <Board />
        </main>
      </div>
    </div>
  );
}
